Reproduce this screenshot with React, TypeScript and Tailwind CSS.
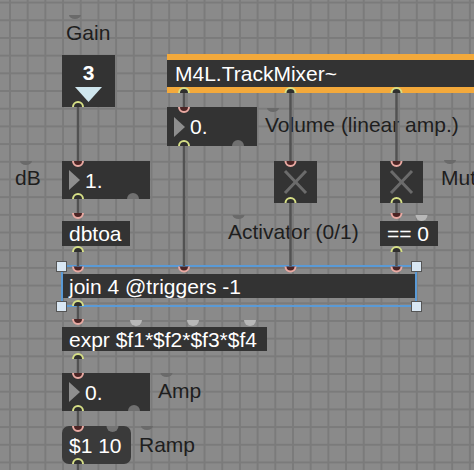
import React from "react";

type Pt = [number, number];

// patch cords: x, from y, to y
const cords: [number, number, number][] = [
  [78, 107, 161],
  [78, 199, 213],
  [78, 252, 266],
  [184, 93, 107],
  [184, 146, 266],
  [290.5, 93, 161],
  [290.5, 203, 266],
  [396.5, 93, 161],
  [396.5, 203, 213],
  [396.5, 252, 266],
  [78, 306, 319],
  [78, 359, 373],
  [78, 411, 426],
  [78, 464, 472],
];

const inlets: Pt[] = [
  [78, 161], [78, 213], [184, 107], [290.5, 161], [396.5, 161], [396.5, 213],
  [78, 266.5], [184, 266.5], [290.5, 266.5], [396.5, 266.5],
  [78, 319], [78, 373], [78, 426],
];

const outlets: Pt[] = [
  [78, 107], [184, 93], [290.5, 93], [396.5, 93], [184, 146], [78, 199],
  [78, 252], [290.5, 203], [396.5, 203], [396.5, 252], [78, 306], [78, 359],
  [78, 411], [78, 464],
];

const greyOutlets: Pt[] = [[238, 146], [133, 199], [134, 411]];
const lightInlets: Pt[] = [[421.5, 215], [136, 320], [193, 320], [250, 320]];
const notes: Pt[] = [
  [75, 15], [26, 161], [273, 108], [238.5, 215], [450, 160], [166.5, 373], [147, 426],
];

const cup = (x: number, y: number, r = 5) => `M ${x - r} ${y} A ${r} ${r} 0 0 0 ${x + r} ${y}`;
const cap = (x: number, y: number, r = 5) => `M ${x - r} ${y} A ${r} ${r} 0 0 1 ${x + r} ${y}`;

const Flonum = ({ className, value }: { className: string; value: string }) => (
  <div className={`absolute bg-[#333] text-white flex items-center ${className}`}>
    <svg className="ml-[7px] mr-[5px] shrink-0" width="11" height="20">
      <polygon points="0,0 11,10 0,20" fill="#8e8e8e" />
    </svg>
    <span>{value}</span>
  </div>
);

const Toggle = ({ className }: { className: string }) => (
  <div className={`absolute w-[43px] h-[42px] bg-[#333] ${className}`}>
    <svg width="43" height="42">
      <path d="M11 10 L32 32 M32 10 L11 32" stroke="#6b6b6b" strokeWidth="3" />
    </svg>
  </div>
);

const Handle = ({ className }: { className: string }) => (
  <div className={`absolute w-[11px] h-[11px] bg-[#d9e7f3] border border-[#555] ${className}`} />
);

export default function App() {
  return (
    <div className="relative w-[474px] h-[470px] overflow-hidden bg-[#8a8a8a] font-['Liberation_Sans',Arial,sans-serif] text-[21px] leading-none text-[#1e1e1e]">
      <div className="absolute inset-0 bg-[linear-gradient(to_right,#7b7b7b_2px,transparent_2px),linear-gradient(to_bottom,#7b7b7b_2px,transparent_2px)] bg-[length:17.7px_17.7px] bg-[position:9px_1.6px]" />

      {/* comments */}
      <div className="absolute left-[66px] top-[22px]">Gain</div>
      <div className="absolute left-[265px] top-[114px] whitespace-nowrap">Volume (linear amp.)</div>
      <div className="absolute left-[15px] top-[167px]">dB</div>
      <div className="absolute left-[228px] top-[221px] whitespace-nowrap">Activator (0/1)</div>
      <div className="absolute left-[441px] top-[167px]">Mute</div>
      <div className="absolute left-[158px] top-[380px]">Amp</div>
      <div className="absolute left-[139px] top-[434px]">Ramp</div>

      {/* gain menu */}
      <div className="absolute left-[62px] top-[55px] w-[53px] h-[52px] bg-[#333]">
        <div className="pt-[7px] text-center font-bold text-white">3</div>
        <svg className="absolute left-[13px] top-[32px]" width="28" height="16">
          <polygon points="0,0 27,0 13.5,15" fill="#cfe6ee" />
        </svg>
      </div>

      {/* track mixer */}
      <div className="absolute left-[167px] top-[54px] w-[320px] h-[39px] border-y-[6px] border-[#f3a93b] bg-[#333] flex items-center pl-[8px] text-white">
        M4L.TrackMixer~
      </div>

      <Flonum className="left-[167px] top-[107px] w-[90px] h-[39px]" value="0." />
      <Flonum className="left-[62px] top-[161px] w-[88px] h-[38px]" value="1." />
      <Flonum className="left-[62px] top-[373px] w-[88px] h-[38px]" value="0." />

      <Toggle className="left-[274px] top-[161px]" />
      <Toggle className="left-[380px] top-[161px]" />

      <div className="absolute left-[62px] top-[221px] w-[68px] h-[25px] bg-[#333] text-white flex items-center pl-[7px]">dbtoa</div>
      <div className="absolute left-[380px] top-[221px] w-[58px] h-[25px] bg-[#333] text-white flex items-center pl-[7px]">== 0</div>

      {/* selected join */}
      <div className="absolute left-[61px] top-[265px] w-[356px] h-[42px] border-2 border-[#5a9ad6]">
        <div className="mt-[7px] h-[24px] bg-[#333] text-white flex items-center pl-[6px]">join 4 @triggers -1</div>
      </div>
      <Handle className="left-[56px] top-[261px]" />
      <Handle className="left-[411px] top-[261px]" />
      <Handle className="left-[56px] top-[301px]" />
      <Handle className="left-[411px] top-[301px]" />

      <div className="absolute left-[62px] top-[327px] w-[205px] h-[24px] bg-[#333] text-white flex items-center pl-[7px] whitespace-nowrap">
        expr $f1*$f2*$f3*$f4
      </div>

      <div className="absolute left-[62px] top-[426px] w-[69px] h-[38px] rounded-[7px] bg-[#3a3a3a] text-white flex items-center pl-[7px]">$1 10</div>

      {/* cords and ports */}
      <svg className="absolute inset-0 pointer-events-none" width="474" height="470">
        {cords.map(([x, a, b], i) => (
          <line key={i} x1={x} y1={a} x2={x} y2={b} stroke="#525252" strokeWidth="2.5" />
        ))}
        {notes.map(([x, y], i) => (
          <path key={i} d={`M ${x - 6} ${y} A 6 4 0 0 0 ${x + 6} ${y} Z`} fill="#6a6a6a" />
        ))}
        {greyOutlets.map(([x, y], i) => (
          <path key={i} d={cap(x, y, 6) + " Z"} fill="#707070" />
        ))}
        {lightInlets.map(([x, y], i) => (
          <path key={i} d={cup(x, y, 6) + " Z"} fill="#b8b8b8" />
        ))}
        <path d={cup(112.5, 426, 6) + " Z"} fill="#747474" />
        {inlets.map(([x, y], i) => (
          <g key={i}>
            <path d={cup(x, y) + " Z"} fill="#4b2424" />
            <path d={cup(x, y)} fill="none" stroke="#e9a9a2" strokeWidth="2" />
          </g>
        ))}
        {outlets.map(([x, y], i) => (
          <g key={i}>
            <path d={cap(x, y) + " Z"} fill="#2f2f2f" />
            <path d={cap(x, y)} fill="none" stroke="#d6df86" strokeWidth="2" />
          </g>
        ))}
      </svg>
    </div>
  );
}
